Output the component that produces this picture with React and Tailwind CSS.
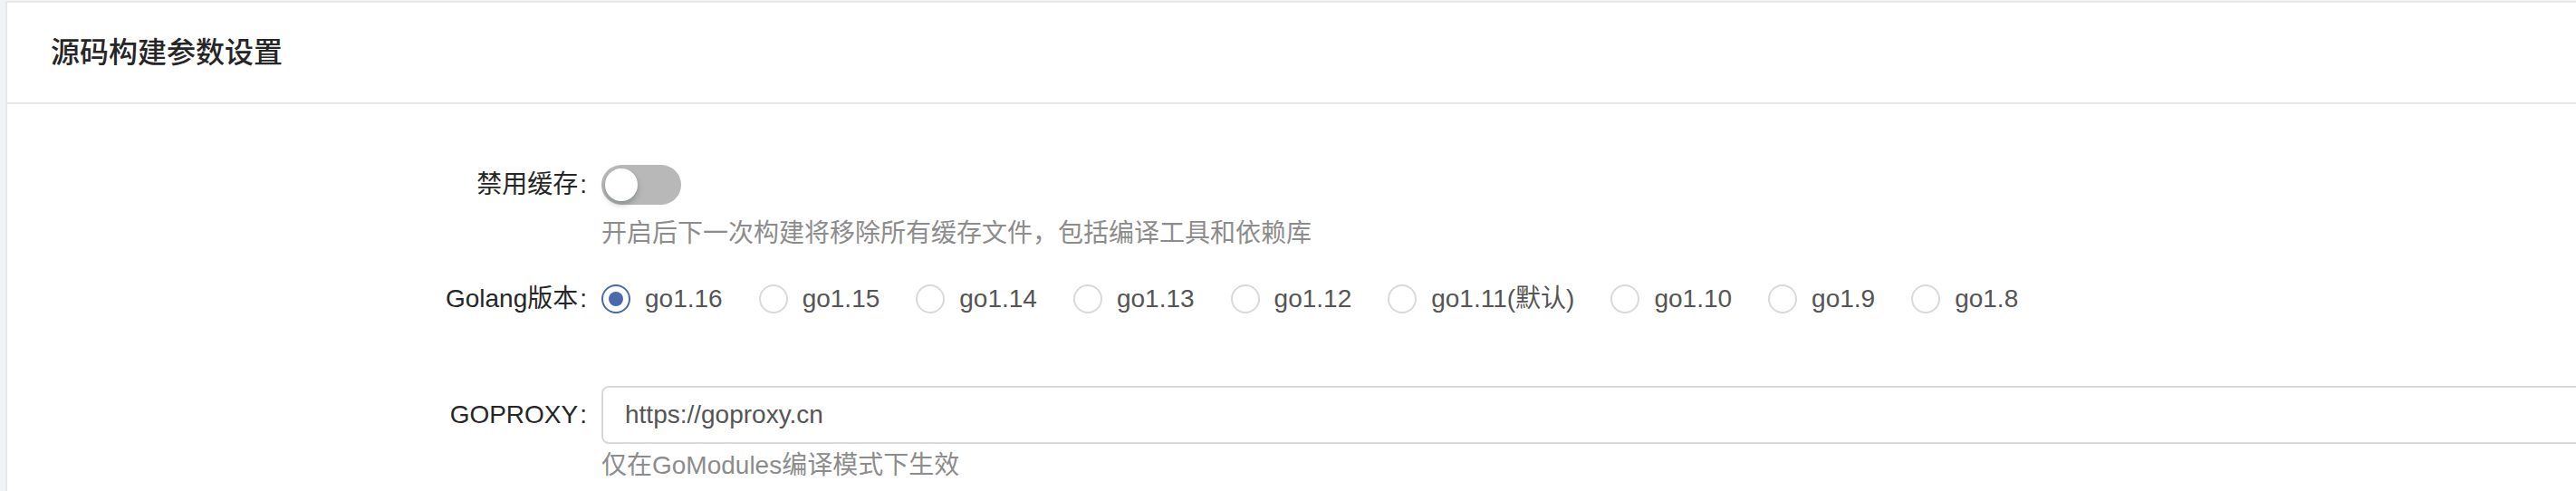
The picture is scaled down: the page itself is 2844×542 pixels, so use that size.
import React, { useState } from "react";

const versions = ["go1.16", "go1.15", "go1.14", "go1.13", "go1.12", "go1.11(默认)", "go1.10", "go1.9", "go1.8"];

const font = { fontFamily: '"Liberation Sans", "Noto Sans CJK SC", sans-serif' };

function Label({ children }) {
  return (
    <div className="w-[656px] shrink-0 flex justify-end items-center h-[64px] text-[28px] text-[#262626]">
      <span>{children}</span>
      <span className="ml-[2px] mr-[16px]">:</span>
    </div>
  );
}

function Radio({ label, checked, onClick }) {
  return (
    <label onClick={onClick} className="flex items-center mr-[24px] cursor-pointer">
      <span
        className={
          "w-[32px] h-[32px] rounded-full border-2 flex items-center justify-center bg-white " +
          (checked ? "border-[#4b68ad]" : "border-[#d9d9d9]")
        }
      >
        {checked && <span className="w-[16px] h-[16px] rounded-full bg-[#4b68ad]" />}
      </span>
      <span className="pl-[16px] pr-[16px] text-[28px] text-[#555]">{label}</span>
    </label>
  );
}

export default function App() {
  const [cache, setCache] = useState(false);
  const [ver, setVer] = useState("go1.16");

  return (
    <div className="h-[542px] overflow-hidden bg-[#f0f2f5] pl-[6px] pt-[1px]" style={font}>
      <div className="w-[2900px] h-full bg-white border-l-2 border-t-2 border-[#e8e8e8]">
        <div className="h-[112px] flex items-center pl-[48px] border-b-2 border-[#e8e8e8]">
          <h2 className="text-[32px] font-medium text-[#262626]">源码构建参数设置</h2>
        </div>

        <div className="pt-[57px]">
          <div className="flex">
            <Label>禁用缓存</Label>
            <div>
              <div className="h-[64px] flex items-center">
                <button
                  onClick={() => setCache(!cache)}
                  className={
                    "relative w-[88px] h-[44px] rounded-full " + (cache ? "bg-[#4b68ad]" : "bg-[#b8b8b8]")
                  }
                >
                  <span
                    className={
                      "absolute top-[4px] w-[36px] h-[36px] rounded-full bg-white shadow-[0_4px_6px_rgba(0,35,11,0.25)] " +
                      (cache ? "left-[48px]" : "left-[4px]")
                    }
                  />
                </button>
              </div>
              <div className="text-[28px] leading-[44px] text-[#8c8c8c]">
                开启后下一次构建将移除所有缓存文件，包括编译工具和依赖库
              </div>
            </div>
          </div>

          <div className="flex mt-[18px]">
            <Label>Golang版本</Label>
            <div className="h-[64px] flex items-center">
              {versions.map((v) => (
                <Radio key={v} label={v} checked={ver === v} onClick={() => setVer(v)} />
              ))}
            </div>
          </div>

          <div className="flex mt-[64px]">
            <Label>GOPROXY</Label>
            <div className="flex-1">
              <div className="h-[64px] w-[2300px] border-2 border-[#d9d9d9] rounded-[8px] flex items-center px-[24px] text-[28px] text-[#555]">
                https://goproxy.cn
              </div>
              <div className="text-[28px] leading-[44px] text-[#8c8c8c] mt-[2px]">仅在GoModules编译模式下生效</div>
            </div>
          </div>
        </div>
      </div>
    </div>
  );
}
